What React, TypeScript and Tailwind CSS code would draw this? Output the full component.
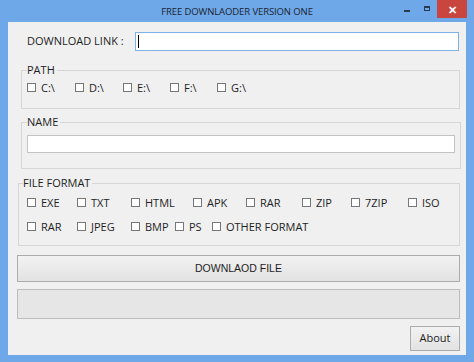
import React from 'react';

const FONT = { fontFamily: '"Open Sans", "Noto Sans", sans-serif' };

// Classic little checkbox with its caption
const Check = ({ label, width }: { label: string; width: string }) => (
    <label className={`flex items-center h-[14px] shrink-0 ${width}`}>
        <span className="w-[9px] h-[9px] border border-[#777] bg-white shrink-0" />
        <span className="ml-[5px] text-[11px] leading-none text-[#1e1e1e] whitespace-nowrap">{label}</span>
    </label>
);

const PATHS = [
    { label: 'C:\\', width: 'w-[48px]' },
    { label: 'D:\\', width: 'w-[48px]' },
    { label: 'E:\\', width: 'w-[47px]' },
    { label: 'F:\\', width: 'w-[47px]' },
    { label: 'G:\\', width: 'w-[47px]' },
];

const ROW_ONE = [
    { label: 'EXE', width: 'w-[50px]' },
    { label: 'TXT', width: 'w-[54px]' },
    { label: 'HTML', width: 'w-[62px]' },
    { label: 'APK', width: 'w-[53px]' },
    { label: 'RAR', width: 'w-[56px]' },
    { label: 'ZIP', width: 'w-[49px]' },
    { label: '7ZIP', width: 'w-[57px]' },
    { label: 'ISO', width: 'w-[40px]' },
];

const ROW_TWO = [
    { label: 'RAR', width: 'w-[50px]' },
    { label: 'JPEG', width: 'w-[54px]' },
    { label: 'BMP', width: 'w-[44px]' },
    { label: 'PS', width: 'w-[37px]' },
    { label: 'OTHER FORMAT', width: 'w-[100px]' },
];

const Legend = ({ text }: { text: string }) => (
    <legend className="h-[14px] text-[11px] leading-[14px] text-[#1e1e1e] pr-[2px]">{text}</legend>
);

export default function App() {
    return (
        <div className="w-[474px] h-[362px] bg-[#6ea8e8] flex flex-col overflow-hidden" style={FONT}>
            {/* Title bar */}
            <div className="h-[22px] grid grid-cols-[1fr_auto_1fr] items-start shrink-0">
                <div />
                <div className="pt-[5px] text-[9.5px] leading-[14px] tracking-[-0.1px] text-[#1b2430]">FREE DOWNLAODER VERSION ONE</div>
                <div className="flex justify-end items-start pr-[7px]">
                    <div className="w-[20px] h-[18px] flex items-center justify-center">
                        <span className="block w-[6px] h-[2px] bg-[#2a3a50] mt-[4px]" />
                    </div>
                    <div className="w-[20px] h-[18px] flex items-start justify-center pt-[6px]">
                        <span className="block w-[6px] h-[5px] border border-[#2a3a50] border-t-2" />
                    </div>
                    <div className="w-[30px] h-[18px] bg-[#c9463f] flex items-center justify-center text-white text-[11px] font-bold leading-none">
                        ✕
                    </div>
                </div>
            </div>

            {/* Client area */}
            <div className="mx-[8px] h-[333px] bg-[#f0f0f0] flex flex-col">
                {/* Download link */}
                <div className="mt-[10px] flex items-center h-[19px]">
                    <span className="ml-[19px] w-[108px] text-[11px] text-[#1e1e1e]">DOWNLOAD LINK :</span>
                    <div className="w-[324px] h-[19px] bg-white border border-[#7eb1e6] flex items-center pl-[2px]">
                        <span className="block w-px h-[13px] bg-black" />
                    </div>
                </div>

                {/* Path */}
                <fieldset className="mt-[12px] ml-[13px] w-[439px] border border-[#d6d6d6] px-[5px] pb-[14px]">
                    <Legend text="PATH" />
                    <div className="pt-[3px] flex">
                        {PATHS.map((p) => (
                            <Check key={p.label} label={p.label} width={p.width} />
                        ))}
                    </div>
                </fieldset>

                {/* Name */}
                <fieldset className="mt-[6px] ml-[13px] w-[439px] border border-[#d6d6d6] px-[5px] pb-[15px]">
                    <Legend text="NAME" />
                    <div className="pt-[6px]">
                        <div className="w-[428px] h-[18px] bg-white border border-[#c3c3c3]" />
                    </div>
                </fieldset>

                {/* File format */}
                <fieldset className="mt-[7px] ml-[10px] w-[442px] border border-[#d6d6d6] px-[4px] pb-[12px]">
                    <Legend text="FILE FORMAT" />
                    <div className="pt-[5px] pl-[4px] flex flex-col gap-[10px]">
                        <div className="flex">
                            {ROW_ONE.map((f) => (
                                <Check key={f.label} label={f.label} width={f.width} />
                            ))}
                        </div>
                        <div className="flex">
                            {ROW_TWO.map((f) => (
                                <Check key={f.label} label={f.label} width={f.width} />
                            ))}
                        </div>
                    </div>
                </fieldset>

                {/* Download button */}
                <button className="mt-[9px] ml-[9px] w-[443px] h-[27px] border border-[#acacac] bg-gradient-to-b from-[#f2f2f2] to-[#e2e2e2] text-[10.5px] text-[#1e1e1e] flex items-center justify-center" style={{ fontFamily: '"Liberation Sans", Arial, sans-serif' }}>
                    DOWNLAOD FILE
                </button>

                {/* Progress bar */}
                <div className="mt-[7px] ml-[9px] w-[443px] h-[30px] border border-[#bcbcbc] bg-[#e6e6e6]" />

                {/* About */}
                <div className="mt-[7px] flex justify-end pr-[6px]">
                    <button className="w-[50px] h-[25px] border border-[#acacac] bg-gradient-to-b from-[#f2f2f2] to-[#e2e2e2] text-[11px] text-[#1e1e1e] flex items-center justify-center">
                        About
                    </button>
                </div>
            </div>
        </div>
    );
}
